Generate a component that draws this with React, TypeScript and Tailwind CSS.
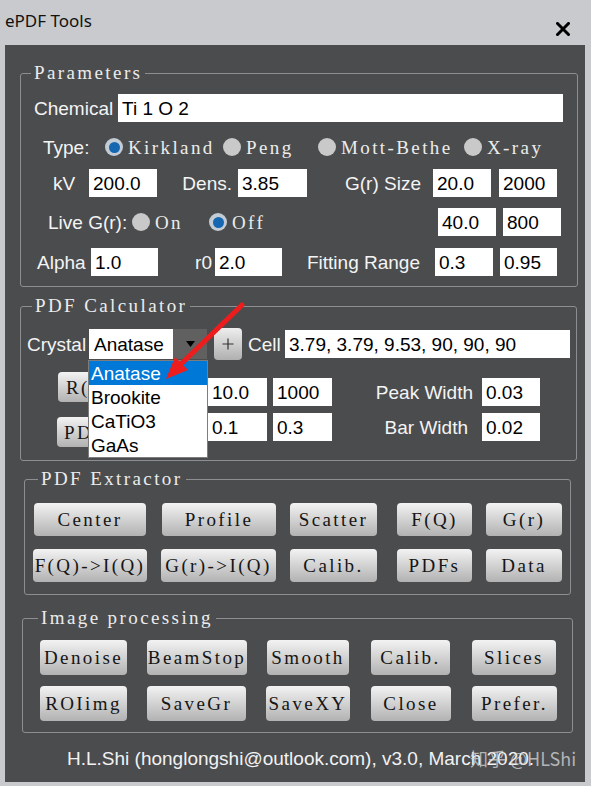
import React from "react";

const sans = "font-['Liberation_Sans',Arial,sans-serif]";
const mono = "font-['Liberation_Serif','Times_New_Roman',serif] tracking-[2.4px]";

function Field({ value, w, className = "" }: { value: string; w: string; className?: string }) {
  return (
    <div className={`${w} h-[28px] shrink-0 bg-white flex items-center pl-[4px] text-[19px] leading-none text-black ${sans} ${className}`}>
      {value}
    </div>
  );
}

function Radio({ checked }: { checked?: boolean }) {
  return checked ? (
    <span className="w-[18px] h-[18px] shrink-0 rounded-full bg-[#c3ccd5] flex items-center justify-center">
      <span className="w-[11px] h-[11px] rounded-full bg-[#1467b0]" />
    </span>
  ) : (
    <span className="w-[18px] h-[18px] shrink-0 rounded-full bg-[#c9c9c9]" />
  );
}

function Option({ label, checked, w }: { label: string; checked?: boolean; w: string }) {
  return (
    <div className={`${w} shrink-0 flex items-center gap-[5px]`}>
      <Radio checked={checked} />
      <span className={`${mono} text-[19px] leading-none text-[#ececec]`}>{label}</span>
    </div>
  );
}

function Btn({ label, w, h, className = "" }: { label: string; w: string; h: string; className?: string }) {
  return (
    <div
      className={`${w} ${h} shrink-0 rounded-[4px] bg-linear-to-b from-[#f3f3f3] to-[#b2b2b2] flex items-center justify-center overflow-hidden whitespace-nowrap ${mono} text-[19px] leading-none text-[#151515] ${className}`}
    >
      {label}
    </div>
  );
}

function Label({ text, w, className = "" }: { text: string; w: string; className?: string }) {
  return (
    <div className={`${w} shrink-0 ${sans} text-[19px] leading-none text-[#f4f4f4] whitespace-nowrap ${className}`}>
      {text}
    </div>
  );
}

function Group({
  title,
  legendMl,
  className,
  children,
}: {
  title: string;
  legendMl: string;
  className: string;
  children: React.ReactNode;
}) {
  return (
    <fieldset className={`border border-[#8d8e91] rounded-[3px] ${className}`}>
      <legend className={`${legendMl} px-[3px] h-[22px] ${mono} text-[19px] leading-[22px] text-[#ececec]`}>
        {title}
      </legend>
      {children}
    </fieldset>
  );
}

export default function App() {
  return (
    <div className="relative w-[591px] h-[786px] bg-[#c8cacd] flex flex-col overflow-hidden">
      {/* title bar */}
      <div className="h-[45px] shrink-0 flex items-start justify-between">
        <div className="mt-[8px] ml-[5px] font-['Noto_Sans','Open_Sans',sans-serif] text-[17px] leading-[26px] text-[#111]">
          ePDF Tools
        </div>
        <svg className="mt-[22px] mr-[21px]" width="14" height="14" viewBox="0 0 14 14">
          <path d="M1.5 1.5 L12.5 12.5 M12.5 1.5 L1.5 12.5" stroke="#000" strokeWidth="3" strokeLinecap="square" />
        </svg>
      </div>

      {/* main panel */}
      <div className="ml-[5px] w-[580px] h-[737px] bg-[#4b4c4e] flex flex-col">
        {/* Parameters */}
        <Group title="Parameters" legendMl="ml-[10px]" className="mt-[17px] ml-[15px] w-[558px] pb-[10px]">
          <div className="flex items-center h-[28px] mt-[10px]">
            <Label text="Chemical" w="w-[84px]" className="ml-[13px]" />
            <Field value="Ti 1 O 2" w="w-[445px]" />
          </div>
          <div className="flex items-center h-[28px] mt-[11px]">
            <Label text="Type:" w="w-[62px]" className="ml-[22px]" />
            <Option label="Kirkland" checked w="w-[118px]" />
            <Option label="Peng" w="w-[95px]" />
            <Option label="Mott-Bethe" w="w-[146px]" />
            <Option label="X-ray" w="w-[90px]" />
          </div>
          <div className="flex items-center h-[28px] mt-[8px]">
            <Label text="kV" w="w-[36px]" className="ml-[32px]" />
            <Field value="200.0" w="w-[68px]" />
            <Label text="Dens." w="w-[81px]" className="text-right pr-[6px]" />
            <Field value="3.85" w="w-[69px]" />
            <Label text="G(r) Size" w="w-[126px]" className="text-right pr-[12px]" />
            <Field value="20.0" w="w-[58px]" />
            <Field value="2000" w="w-[58px]" className="ml-[8px]" />
          </div>
          <div className="flex items-center h-[28px] mt-[11px]">
            <Label text="Live G(r):" w="w-[84px]" className="ml-[27px]" />
            <Option label="On" w="w-[77px]" />
            <Option label="Off" w="w-[229px]" checked />
            <Field value="40.0" w="w-[58px]" />
            <Field value="800" w="w-[58px]" className="ml-[7px]" />
          </div>
          <div className="flex items-center h-[28px] mt-[12px]">
            <Label text="Alpha" w="w-[54px]" className="ml-[16px]" />
            <Field value="1.0" w="w-[67px]" />
            <Label text="r0" w="w-[57px]" className="text-right pr-[3px]" />
            <Field value="2.0" w="w-[67px]" />
            <Label text="Fitting Range" w="w-[153px]" className="text-right pr-[15px]" />
            <Field value="0.3" w="w-[58px]" />
            <Field value="0.95" w="w-[57px]" className="ml-[7px]" />
          </div>
        </Group>

        {/* PDF Calculator */}
        <Group title="PDF Calculator" legendMl="ml-[11px]" className="mt-[8px] ml-[15px] w-[557px] pb-[13px]">
          <div className="flex items-center h-[30px] mt-[12px]">
            <Label text="Crystal" w="w-[62px]" className="ml-[6px]" />
            <div className="relative w-[118px] h-[30px] shrink-0 flex z-10">
              <div className={`flex-1 bg-white flex items-center pl-[5px] text-[19px] leading-none text-black ${sans}`}>
                Anatase
              </div>
              <div className="w-[34px] bg-[#606060] flex items-center justify-center">
                <svg width="9" height="6" viewBox="0 0 9 6">
                  <path d="M0 0 H9 L4.5 6 Z" fill="#000" />
                </svg>
              </div>
              {/* open drop-down list */}
              <div className="absolute left-[-1px] top-[31px] w-[120px] bg-white border border-[#7d7d7d] flex flex-col">
                {["Anatase", "Brookite", "CaTiO3", "GaAs"].map((item, i) => (
                  <div
                    key={item}
                    className={`h-[24px] flex items-center pl-[2px] text-[19px] leading-none ${sans} ${
                      i === 0 ? "bg-[#0078d7] text-white" : "text-black"
                    }`}
                  >
                    {item}
                  </div>
                ))}
              </div>
            </div>
            <div className="ml-[7px] w-[28px] h-[32px] shrink-0 rounded-[4px] bg-linear-to-b from-[#eeeeee] to-[#b0b0b0] flex items-center justify-center">
              <svg width="12" height="12" viewBox="0 0 12 12">
                <path d="M6 0.5 V11.5 M0.5 6 H11.5" stroke="#333" strokeWidth="1.2" />
              </svg>
            </div>
            <Label text="Cell" w="w-[37px]" className="ml-[6px]" />
            <Field value="3.79, 3.79, 9.53, 90, 90, 90" w="w-[285px]" />
          </div>
          <div className="flex h-[34px] mt-[13px]">
            <Btn label="R(r)" w="w-[62px]" h="h-[30px]" className="ml-[37px] self-start justify-start pl-[8px]" />
            <div className="flex items-center self-end h-[28px] ml-[88px]">
              <Field value="10.0" w="w-[59px]" />
              <Field value="1000" w="w-[59px]" className="ml-[6px]" />
              <Label text="Peak Width" w="w-[150px]" className="text-right pr-[9px]" />
              <Field value="0.03" w="w-[58px]" />
            </div>
          </div>
          <div className="flex h-[34px] mt-[7px]">
            <Btn label="PDF" w="w-[62px]" h="h-[30px]" className="ml-[36px] self-end justify-start pl-[7px]" />
            <div className="flex items-center self-start h-[28px] ml-[89px]">
              <Field value="0.1" w="w-[59px]" />
              <Field value="0.3" w="w-[59px]" className="ml-[6px]" />
              <Label text="Bar Width" w="w-[150px]" className="text-right pr-[14px]" />
              <Field value="0.02" w="w-[58px]" />
            </div>
          </div>
        </Group>

        {/* PDF Extractor */}
        <Group title="PDF Extractor" legendMl="ml-[13px]" className="mt-[7px] ml-[19px] w-[547px] pb-[12px]">
          <div className="flex mt-[13px]">
            <Btn label="Center" w="w-[112px]" h="h-[33px]" className="ml-[9px]" />
            <Btn label="Profile" w="w-[114px]" h="h-[33px]" className="ml-[16px]" />
            <Btn label="Scatter" w="w-[87px]" h="h-[33px]" className="ml-[14px]" />
            <Btn label="F(Q)" w="w-[75px]" h="h-[33px]" className="ml-[20px]" />
            <Btn label="G(r)" w="w-[76px]" h="h-[33px]" className="ml-[14px]" />
          </div>
          <div className="flex mt-[13px]">
            <Btn label="F(Q)->I(Q)" w="w-[114px]" h="h-[33px]" className="ml-[8px]" />
            <Btn label="G(r)->I(Q)" w="w-[115px]" h="h-[33px]" className="ml-[14px]" />
            <Btn label="Calib." w="w-[87px]" h="h-[33px]" className="ml-[14px]" />
            <Btn label="PDFs" w="w-[75px]" h="h-[33px]" className="ml-[20px]" />
            <Btn label="Data" w="w-[76px]" h="h-[33px]" className="ml-[14px]" />
          </div>
        </Group>

        {/* Image processing */}
        <Group title="Image processing" legendMl="ml-[15px]" className="mt-[12px] ml-[17px] w-[551px] pb-[11px]">
          <div className="flex mt-[11px]">
            <Btn label="Denoise" w="w-[87px]" h="h-[35px]" className="ml-[17px]" />
            <Btn label="BeamStop" w="w-[100px]" h="h-[35px]" className="ml-[20px]" />
            <Btn label="Smooth" w="w-[82px]" h="h-[35px]" className="ml-[20px]" />
            <Btn label="Calib." w="w-[79px]" h="h-[35px]" className="ml-[22px]" />
            <Btn label="Slices" w="w-[84px]" h="h-[35px]" className="ml-[22px]" />
          </div>
          <div className="flex mt-[11px]">
            <Btn label="ROIimg" w="w-[87px]" h="h-[35px]" className="ml-[17px]" />
            <Btn label="SaveGr" w="w-[99px]" h="h-[35px]" className="ml-[20px]" />
            <Btn label="SaveXY" w="w-[84px]" h="h-[35px]" className="ml-[20px]" />
            <Btn label="Close" w="w-[80px]" h="h-[35px]" className="ml-[21px]" />
            <Btn label="Prefer." w="w-[85px]" h="h-[35px]" className="ml-[21px]" />
          </div>
        </Group>

        {/* footer */}
        <div className="relative mt-[13px] h-[24px] flex items-center">
          <div className={`ml-[62px] ${sans} text-[19px] leading-none text-[#f2f2f2] whitespace-nowrap`}>
            H.L.Shi (honglongshi@outlook.com), v3.0, March 2020.
          </div>
          <div className="absolute left-[465px] top-[2px] font-['Noto_Sans_CJK_SC','Liberation_Sans',sans-serif] text-[18px] leading-[20px] text-[#d8d8d8]/75 whitespace-nowrap">
            知乎 @HLShi
          </div>
        </div>
      </div>

      {/* red annotation arrow */}
      <svg className="absolute left-0 top-0 z-20 pointer-events-none" width="591" height="786" viewBox="0 0 591 786">
        <line x1="242" y1="305" x2="181" y2="364" stroke="#ee1d1d" strokeWidth="5" strokeLinecap="round" />
        <polygon points="166,379 175,357 188,370" fill="#ee1d1d" />
      </svg>
    </div>
  );
}
